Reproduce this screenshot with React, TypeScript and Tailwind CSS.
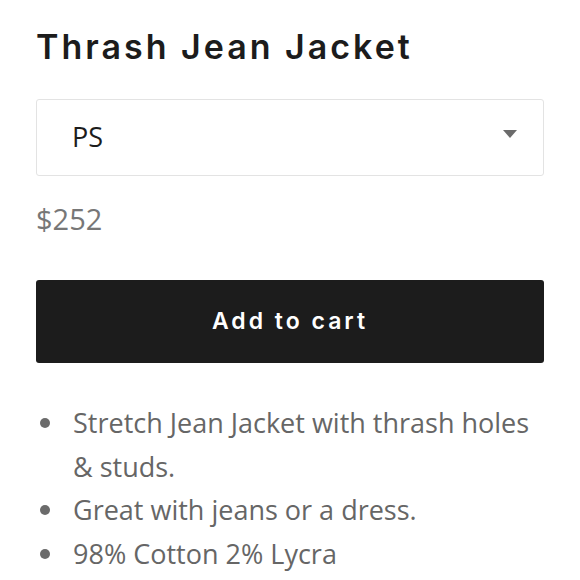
import React from "react";

const items = [
  "Stretch Jean Jacket with thrash holes & studs.",
  "Great with jeans or a dress.",
  "98% Cotton 2% Lycra",
];

export default function App() {
  return (
    <div className="w-[580px] h-[580px] bg-white overflow-hidden px-[36px] pt-[24px]">
      <h1 className="font-['Inter',Roboto,sans-serif] text-[34px] leading-[46px] font-semibold tracking-[3px] text-[#1c1c1c]">
        Thrash Jean Jacket
      </h1>
      <div className="mt-[29px] h-[77px] w-[508px] border border-[#e3e3e3] rounded-[3px] flex items-center justify-between pl-[35px] pr-[26px]">
        <span className="font-['Open_Sans',sans-serif] text-[27px] text-[#1c1c1c]">PS</span>
        <svg width="14" height="9" viewBox="0 0 14 9" className="mt-[-6px]">
          <polygon points="0,0 14,0 7,8" fill="#6b6b6b" />
        </svg>
      </div>
      <div className="mt-[23px] font-['Open_Sans',sans-serif] text-[29px] leading-[40px] text-[#777777]">
        $252
      </div>
      <button className="mt-[41px] w-[508px] h-[83px] bg-[#1c1c1c] rounded-[3px] text-white font-['Inter',Roboto,sans-serif] text-[23px] font-semibold tracking-[3px]">
        Add to cart
      </button>
      <ul className="mt-[38px] font-['Open_Sans',sans-serif] text-[27px] leading-[43.5px] text-[#666666]">
        {items.map((t) => (
          <li key={t} className="flex">
            <span className="w-[37px] shrink-0 flex justify-start pl-[4px] pt-[17px]">
              <span className="block w-[10px] h-[10px] rounded-full bg-[#6b6b6b]" />
            </span>
            <span className="pr-[10px]">{t}</span>
          </li>
        ))}
      </ul>
    </div>
  );
}
